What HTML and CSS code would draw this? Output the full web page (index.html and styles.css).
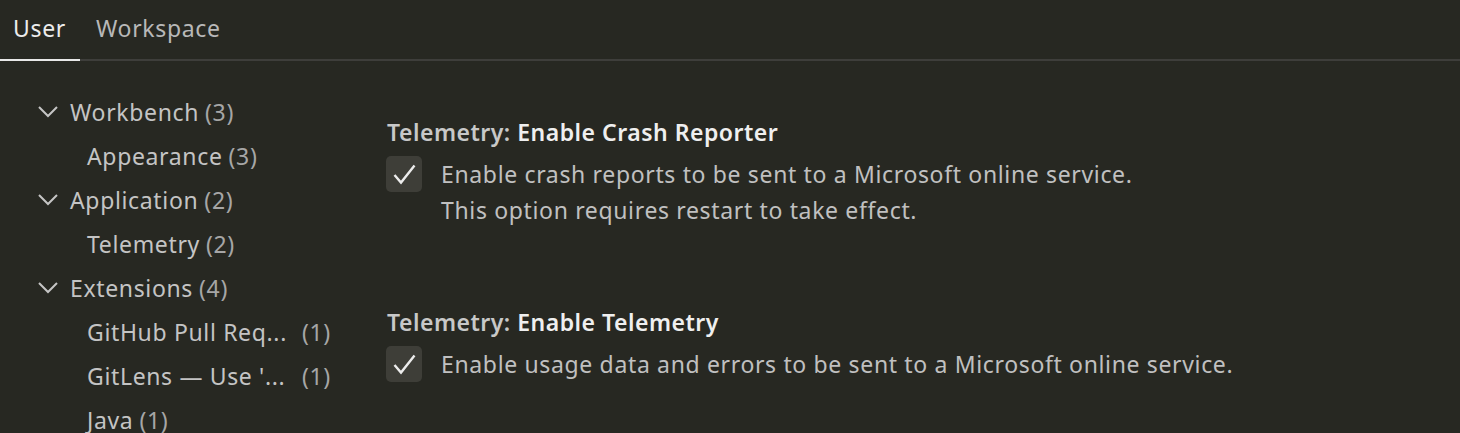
FILE: index.html
```html
<!DOCTYPE html>
<html lang="en">
<head>
<meta charset="utf-8">
<title>Settings</title>
<link rel="stylesheet" href="styles.css">
</head>
<body>
<div class="tabs">
  <div class="tab active">User</div>
  <div class="tab">Workspace</div>
</div>
<div class="main">
  <nav class="tree">
    <div class="row level0">
      <svg class="chev" viewBox="0 0 20 12" width="20" height="12"><path d="M1 1 L10 10 L19 1" fill="none" stroke="#c5c5c5" stroke-width="2"/></svg>
      <span class="label">Workbench</span><span class="count">(3)</span>
    </div>
    <div class="row level1"><span class="label">Appearance</span><span class="count">(3)</span></div>
    <div class="row level0">
      <svg class="chev" viewBox="0 0 20 12" width="20" height="12"><path d="M1 1 L10 10 L19 1" fill="none" stroke="#c5c5c5" stroke-width="2"/></svg>
      <span class="label">Application</span><span class="count">(2)</span>
    </div>
    <div class="row level1"><span class="label">Telemetry</span><span class="count">(2)</span></div>
    <div class="row level0">
      <svg class="chev" viewBox="0 0 20 12" width="20" height="12"><path d="M1 1 L10 10 L19 1" fill="none" stroke="#c5c5c5" stroke-width="2"/></svg>
      <span class="label">Extensions</span><span class="count">(4)</span>
    </div>
    <div class="row level1"><span class="label trunc">GitHub Pull Req...</span><span class="count">(1)</span></div>
    <div class="row level1"><span class="label trunc">GitLens — Use '...</span><span class="count">(1)</span></div>
    <div class="row level1"><span class="label">Java</span><span class="count">(1)</span></div>
  </nav>
  <section class="settings">
    <div class="setting">
      <div class="title"><span class="cat">Telemetry: </span><span class="name">Enable Crash Reporter</span></div>
      <div class="value">
        <div class="checkbox"><svg viewBox="0 0 36 36" width="36" height="36"><path d="M8.5 19 L15 26.5 L28.5 9.5" fill="none" stroke="#ececec" stroke-width="2.4"/></svg></div>
        <div class="desc">Enable crash reports to be sent to a Microsoft online service.<br>This option requires restart to take effect.</div>
      </div>
    </div>
    <div class="setting">
      <div class="title"><span class="cat">Telemetry: </span><span class="name">Enable Telemetry</span></div>
      <div class="value">
        <div class="checkbox"><svg viewBox="0 0 36 36" width="36" height="36"><path d="M8.5 19 L15 26.5 L28.5 9.5" fill="none" stroke="#ececec" stroke-width="2.4"/></svg></div>
        <div class="desc">Enable usage data and errors to be sent to a Microsoft online service.</div>
      </div>
    </div>
  </section>
</div>
</body>
</html>
```
FILE: styles.css
```css
html, body {
  margin: 0;
  padding: 0;
  background: #272822;
  height: 100%;
  overflow: hidden;
}
body {
  font-family: "Noto Sans", "Open Sans", sans-serif;
  font-size: 23px;
  letter-spacing: 0.65px;
  color: #c2c2c2;
}
.tabs {
  display: flex;
  height: 59px;
  border-bottom: 2px solid #3e3e3b;
}
.tab {
  padding: 0 15px 0 13px;
  line-height: 56px;
  color: #b8b8b8;
  height: 59px;
  box-sizing: border-box;
}
.tab.active {
  color: #ececec;
  border-bottom: 2px solid #e8e8e8;
  height: 61px;
  width: 80px;
}
.tab + .tab {
  padding-left: 16px;
}
.main {
  display: flex;
  padding-top: 29px;
}
.tree {
  width: 387px;
  flex: none;
}
.row {
  display: flex;
  align-items: center;
  height: 44px;
  white-space: nowrap;
}
.level0 {
  padding-left: 38px;
}
.level1 {
  padding-left: 87px;
}
.chev {
  margin-right: 12px;
  flex: none;
}
.label {
  color: #c4c4c4;
}
.count {
  color: #a6a6a6;
  margin-left: 6px;
}
.label.trunc {
  width: 209px;
  overflow: hidden;
}
.settings {
  padding-top: 24px;
}
.setting + .setting {
  margin-top: 76px;
}
.title {
  line-height: 36px;
  font-weight: 600;
  letter-spacing: 0.5px;
}
.cat {
  color: #c8c8c8;
}
.name {
  color: #efefef;
}
.value {
  display: flex;
  margin-top: 6px;
}
.checkbox {
  width: 36px;
  height: 36px;
  border-radius: 5px;
  background: #3e3e38;
  flex: none;
  margin-left: -1px;
  margin-right: 19px;
}
.checkbox svg {
  display: block;
}
.desc {
  line-height: 36px;
  color: #c0c0c0;
}
```
